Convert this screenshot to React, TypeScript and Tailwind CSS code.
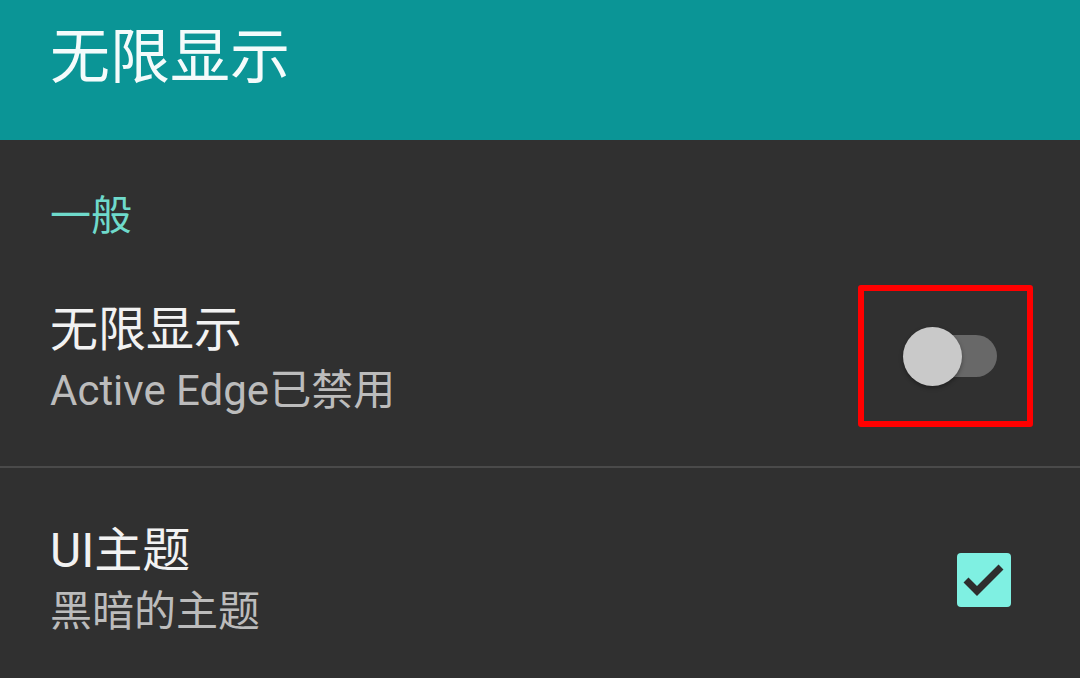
const font = "font-['Roboto','Noto_Sans_CJK_SC',sans-serif]";

function Toggle() {
  return (
    <div className="relative w-[94px] h-[59px]">
      <div className="absolute right-0 top-[8px] w-[84px] h-[42px] rounded-full bg-[#686868]" />
      <div className="absolute left-0 top-0 w-[59px] h-[59px] rounded-full bg-[#c9c9c9] shadow-[0_2px_4px_rgba(0,0,0,0.35)]" />
    </div>
  );
}

function CheckBox() {
  return (
    <div className="w-[54px] h-[54px] rounded-[4px] bg-[#7ff0e2] flex items-center justify-center">
      <svg width="54" height="54" viewBox="0 0 54 54">
        <path d="M9 27 L20 38 L44 14" fill="none" stroke="#2e2e2e" strokeWidth="7" />
      </svg>
    </div>
  );
}

export default function App() {
  return (
    <div className={`w-[1080px] h-[678px] overflow-hidden bg-[#303030] ${font}`}>
      {/* toolbar */}
      <div className="h-[140px] bg-[#0b9596] px-[50px] pt-[28px]">
        <h1 className="text-[60px] leading-[60px] text-[#f4fbfb]">无限显示</h1>
      </div>

      {/* category */}
      <div className="mt-[56px] px-[50px] text-[41px] leading-[41px] text-[#6fdacb]">一般</div>

      {/* row 1 */}
      <div className="mt-[48px] flex items-start justify-between pl-[50px] pr-[47px]">
        <div className="pt-[21px] flex flex-col">
          <span className="text-[48px] leading-[48px] text-[#f2f2f2]">无限显示</span>
          <span className="mt-[16px] text-[42px] leading-[42px] text-[#bcbcbc]">Active Edge已禁用</span>
        </div>
        <div className="w-[175px] h-[142px] border-[6px] border-[#ff0000] rounded-[3px] flex items-center pl-[39px]">
          <Toggle />
        </div>
      </div>

      <div className="mt-[39px] h-[2px] bg-[#4a4a4a]" />

      {/* row 2 */}
      <div className="mt-[59px] flex items-center justify-between pl-[50px] pr-[69px]">
        <div className="flex flex-col">
          <span className="text-[48px] leading-[48px] text-[#f2f2f2]">UI主题</span>
          <span className="mt-[16px] text-[42px] leading-[42px] text-[#bcbcbc]">黑暗的主题</span>
        </div>
        <CheckBox />
      </div>
    </div>
  );
}
